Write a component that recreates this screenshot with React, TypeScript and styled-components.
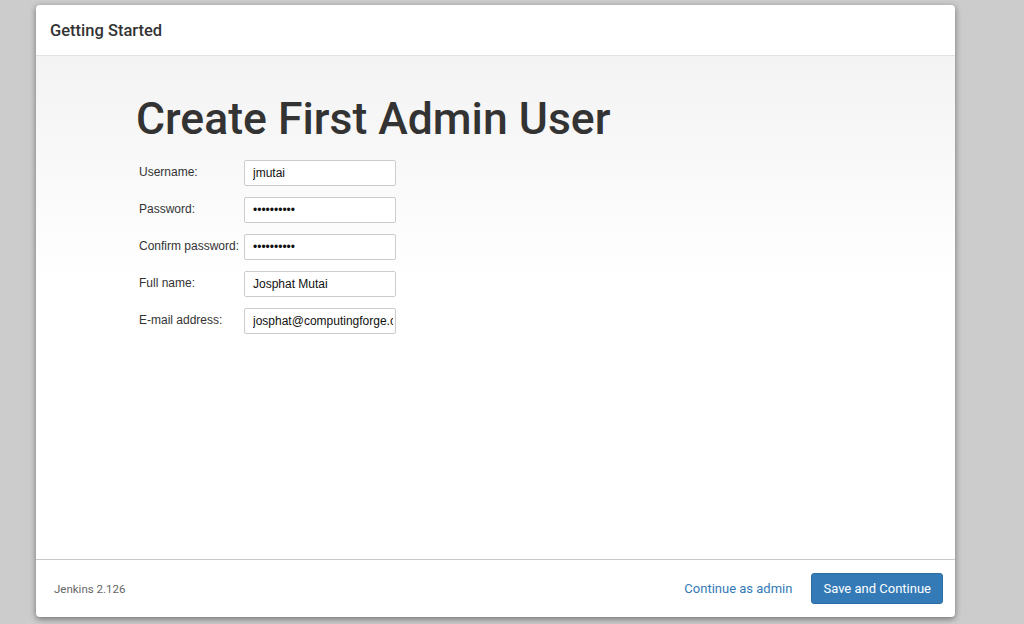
import React from 'react';
import styled, { createGlobalStyle } from 'styled-components';

const Global = createGlobalStyle`
  html, body { margin: 0; padding: 0; background: #cccccc; }
  body { font-family: Roboto, "Liberation Sans", sans-serif; }
`;

const Page = styled.div`
  height: 624px;
  padding: 5px 0 0 36px;
  box-sizing: border-box;
`;

const Dialog = styled.div`
  width: 919px;
  height: 612px;
  background: #fff;
  border-radius: 4px;
  box-shadow: 0 2px 6px rgba(0, 0, 0, 0.45);
  display: flex;
  flex-direction: column;
  overflow: hidden;
`;

const Header = styled.div`
  height: 49px;
  border-bottom: 1px solid #e2e2e2;
  display: flex;
  align-items: center;
  padding: 1px 0 0 14px;
  font-size: 16.5px;
  font-weight: 500;
  color: #333;
`;

const Body = styled.div`
  flex: 1;
  background: linear-gradient(#f3f3f3, #ffffff 45%);
  padding: 38px 0 0 100px;
`;

const Title = styled.h1`
  margin: 0 0 16px;
  font-size: 44.5px;
  font-weight: 500;
  color: #333;
  line-height: 50px;
`;

const Form = styled.div`
  display: grid;
  grid-template-columns: 105px 152px;
  row-gap: 11px;
  padding-left: 3px;
`;

const Label = styled.label`
  font-family: "Liberation Sans", Arial, sans-serif;
  font-size: 12px;
  color: #333;
  padding-top: 5px;
  white-space: nowrap;
`;

const Input = styled.input`
  height: 26px;
  box-sizing: border-box;
  border: 1px solid #ccc;
  border-radius: 2px;
  padding: 0 2px 0 8px;
  font-family: "Liberation Sans", Arial, sans-serif;
  font-size: 12px;
  color: #111;
  background: #fff;
  width: 152px;
`;

const Footer = styled.div`
  height: 57px;
  border-top: 1px solid #c8c8c8;
  display: flex;
  align-items: center;
  padding: 0 12px 0 18px;
`;

const Version = styled.span`
  font-size: 11.5px;
  color: #666;
  flex: 1;
`;

const LinkButton = styled.a`
  font-size: 13px;
  color: #337ab7;
  margin-right: 19px;
`;

const Primary = styled.button`
  background: #337ab7;
  color: #fff;
  border: 1px solid #2e6da4;
  border-radius: 3px;
  height: 31px;
  padding: 0 11px;
  font-family: Roboto, "Liberation Sans", sans-serif;
  font-size: 13px;
`;

const fields = [
  { label: 'Username:', value: 'jmutai', type: 'text' },
  { label: 'Password:', value: 'passwordxx', type: 'password' },
  { label: 'Confirm password:', value: 'passwordxx', type: 'password' },
  { label: 'Full name:', value: 'Josphat Mutai', type: 'text' },
  { label: 'E-mail address:', value: 'josphat@computingforge.com', type: 'text' },
];

const App = () => (
  <Page>
    <Global />
    <Dialog>
      <Header>Getting Started</Header>
      <Body>
        <Title>Create First Admin User</Title>
        <Form>
          {fields.map((f) => (
            <React.Fragment key={f.label}>
              <Label>{f.label}</Label>
              <Input type={f.type} defaultValue={f.value} />
            </React.Fragment>
          ))}
        </Form>
      </Body>
      <Footer>
        <Version>Jenkins 2.126</Version>
        <LinkButton>Continue as admin</LinkButton>
        <Primary>Save and Continue</Primary>
      </Footer>
    </Dialog>
  </Page>
);

export default App;
